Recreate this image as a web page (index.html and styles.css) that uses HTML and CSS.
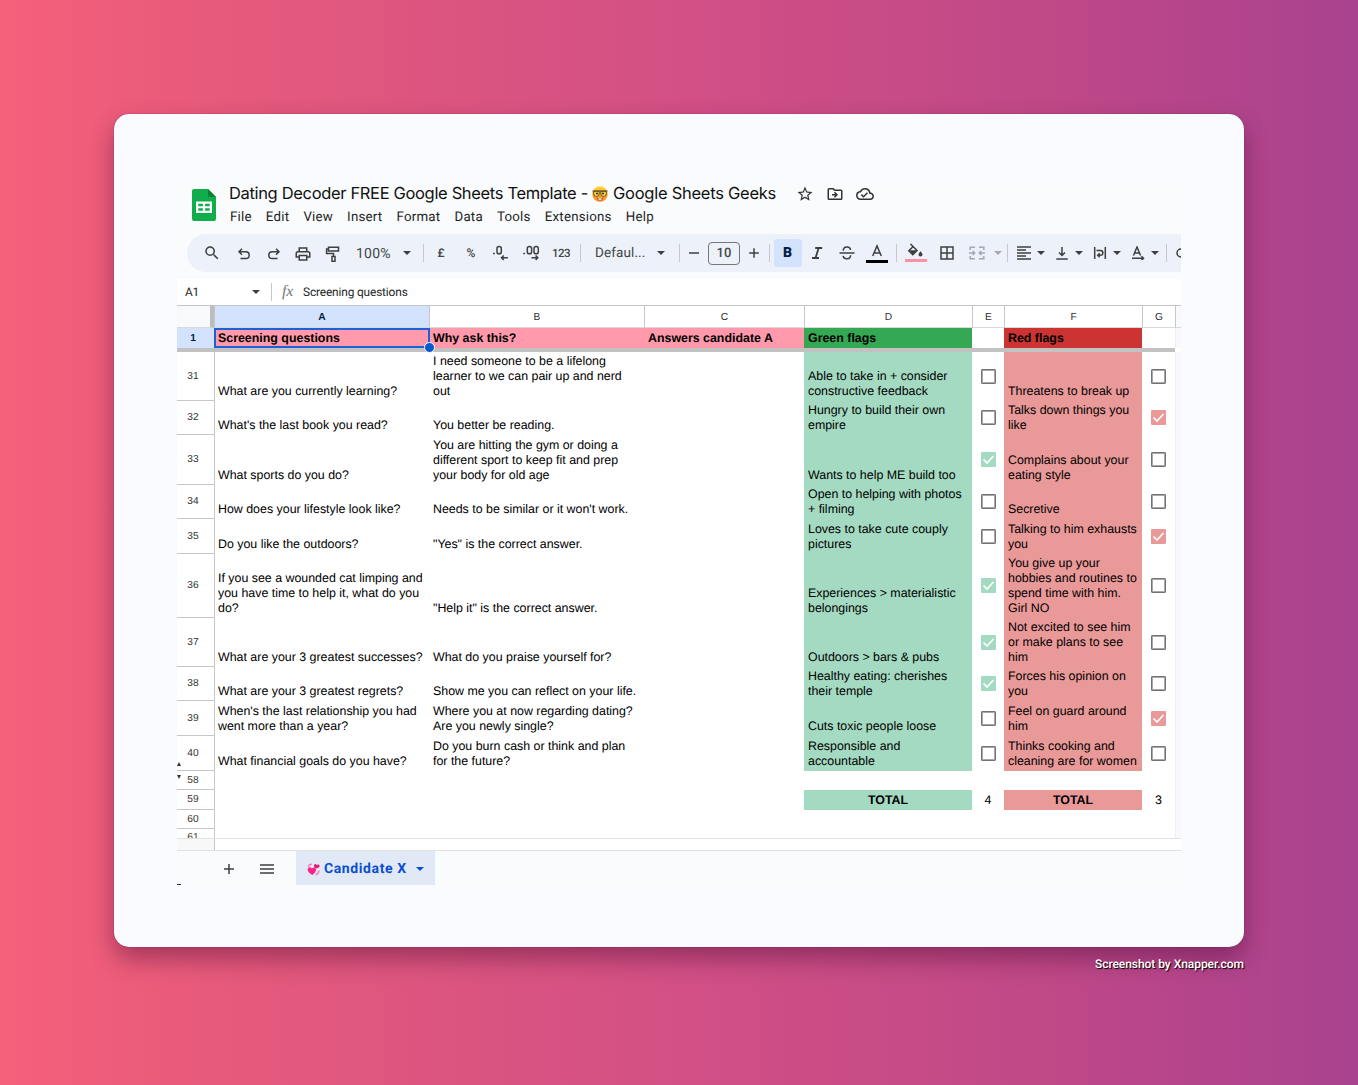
FILE: index.html
```html
<!DOCTYPE html>
<html lang="en">
<head>
    <meta charset="UTF-8">
    <meta name="viewport" content="width=device-width, initial-scale=1.0">
    <title>Dating Decoder FREE Google Sheets Template</title>
    <link rel="stylesheet" href="styles.css">
</head>
<body>
    <main class="card">
        <div class="app">
            <header class="header">
                <svg class="logo" viewBox="0 0 24 32" width="24" height="32">
                    <path d="M2 0H16L24 8V30a2 2 0 0 1-2 2H2a2 2 0 0 1-2-2V2a2 2 0 0 1 2-2z" fill="#0fae4b"/>
                    <path d="M16 0L24 8H16z" fill="#0b8039"/>
                    <path d="M4 12.500H20V24H4z" fill="#fff"/>
                    <path d="M6.300 14.700h4.600v2.500H6.300zM13.100 14.700h4.600v2.500h-4.600zM6.300 19.300h4.600v2.500H6.300zM13.100 19.300h4.600v2.500h-4.600z" fill="#0fae4b"/>
                </svg>
                <div class="heading">
                    <div class="title-row">
                        <span class="title title-main">Dating Decoder FREE Google Sheets Template -</span>
                        <svg class="nerd" viewBox="0 0 16 16" width="16" height="16">
                            <defs>
                                <linearGradient id="face" x1="0" y1="0" x2="0" y2="1">
                                    <stop offset="0" stop-color="#ffd83a"/>
                                    <stop offset="1" stop-color="#f9862c"/>
                                </linearGradient>
                            </defs>
                            <circle cx="8" cy="8" r="7.800" fill="url(#face)"/>
                            <path d="M.5 5h15M1.700 5.200h5.500v2.500c0 2-1.100 2.700-2.700 2.700S1.700 9.700 1.700 7.700zM8.800 5.200h5.500v2.500c0 2-1.200 2.700-2.800 2.700S8.800 9.700 8.800 7.700z" fill="#f5d24a" stroke="#5d4a22" stroke-width="1"/>
                            <circle cx="5" cy="7.500" r=".9" fill="#2a1a0a"/>
                            <circle cx="11" cy="7.500" r=".9" fill="#2a1a0a"/>
                            <path d="M4.500 12c2.300 1 4.700 1 7 0-.7 1.600-2 2.400-3.500 2.400S5.200 13.600 4.500 12z" fill="#a5441a"/>
                            <path d="M6.500 12.500h3v1.300h-3z" fill="#fff"/>
                        </svg>
                        <span class="title title-end">Google Sheets Geeks</span>
                        <svg class="doc-icon star" viewBox="0 0 24 24" width="18" height="18"><path d="M22 9.240l-7.190-.62L12 2 9.190 8.630 2 9.240l5.460 4.730L5.820 21 12 17.270 18.180 21l-1.630-7.030L22 9.240zM12 15.400l-3.760 2.270 1-4.280-3.320-2.880 4.380-.38L12 6.100l1.710 4.040 4.380.38-3.320 2.880 1 4.280L12 15.400z"/></svg>
                        <svg class="doc-icon" viewBox="0 0 24 24" width="18" height="18"><path d="M20 6h-8l-2-2H4a2 2 0 0 0-2 2v12a2 2 0 0 0 2 2h16a2 2 0 0 0 2-2V8a2 2 0 0 0-2-2zm0 12H4V6h5.200l2 2H20v10zm-8-1l4-4-4-4-1.400 1.400 1.600 1.600H8v2h4.200l-1.600 1.600z"/></svg>
                        <svg class="doc-icon" viewBox="0 0 24 24" width="18" height="18"><path d="M19.350 10.040A7.490 7.490 0 0 0 12 4C9.110 4 6.600 5.640 5.350 8.040A5.994 5.994 0 0 0 0 14c0 3.310 2.690 6 6 6h13c2.760 0 5-2.240 5-5 0-2.640-2.050-4.780-4.650-4.960zM19 18H6c-2.210 0-4-1.790-4-4 0-2.050 1.530-3.760 3.560-3.970l1.070-.11.5-.95A5.469 5.469 0 0 1 12 6c2.620 0 4.880 1.860 5.390 4.430l.3 1.500 1.530.11A2.980 2.980 0 0 1 22 15c0 1.650-1.350 3-3 3zm-9-3.820l-2.090-2.090L6.500 13.500 10 17l6.010-6.010-1.410-1.410z"/></svg>
                    </div>
                    <nav class="menu">
                        <span>File</span>
                        <span>Edit</span>
                        <span>View</span>
                        <span>Insert</span>
                        <span>Format</span>
                        <span>Data</span>
                        <span>Tools</span>
                        <span>Extensions</span>
                        <span>Help</span>
                    </nav>
                </div>
            </header>

            <div class="toolbar">
                <span><svg viewBox="0 0 24 24" width="18" height="18"><path d="M15.500 14h-.79l-.28-.27A6.470 6.470 0 0 0 16 9.500 6.500 6.500 0 1 0 9.500 16c1.610 0 3.090-.59 4.230-1.570l.27.28v.79l5 4.990L20.490 19l-4.990-5zm-6 0C7.010 14 5 11.990 5 9.500S7.010 5 9.500 5 14 7.010 14 9.500 11.990 14 9.500 14z"/></svg></span>
                <span class="low"><svg class="line" viewBox="0 0 14 14" width="14" height="14"><path d="M5 1.800L2 4.800l3 3M2.200 4.800h6.600a3.300 3.300 0 0 1 0 6.700H3.500"/></svg></span>
                <span class="low"><svg class="line" viewBox="0 0 14 14" width="14" height="14"><path d="M9 1.800l3 3-3 3M11.800 4.800H5.200a3.300 3.300 0 0 0 0 6.700h5.300"/></svg></span>
                <span class="low"><svg viewBox="0 0 24 24" width="18" height="18"><path d="M19 8h-1V3H6v5H5c-1.660 0-3 1.340-3 3v6h4v4h12v-4h4v-6c0-1.660-1.340-3-3-3zM8 5h8v3H8V5zm8 12v2H8v-4h8v2zm2-2v-2H6v2H4v-4c0-.55.45-1 1-1h14c.55 0 1 .45 1 1v4h-2z"/></svg></span>
                <span class="low"><svg class="line" viewBox="0 0 16 18" width="16" height="18"><path d="M3.500 2.300h10v3.600h-10zM3.500 4.100H1.600v4.300h6.900v3M7 11.400h3v4.800H7z"/></svg></span>
                <span class="zoom">100%</span>
                <span><i class="caret"></i></span>
                <span><i class="sep"></i></span>
                <span class="small">£</span>
                <span class="small">%</span>
                <span><svg class="line" viewBox="0 0 17 16" width="17" height="16"><path d="M1 8.500h1.800M15.800 12.700H9.500M11.700 10.500l-2.200 2.200 2.200 2.200"/><rect x="5" y="1.500" width="4.300" height="7.300" rx="2.100"/></svg></span>
                <span><svg class="line" viewBox="0 0 17 16" width="17" height="16"><path d="M.3 8.500h1.800M8.500 12.700h6.300M12.600 10.500l2.200 2.200-2.200 2.200"/><rect x="4.300" y="1.500" width="4.300" height="7.300" rx="2.100"/><rect x="11" y="1.500" width="4.300" height="7.300" rx="2.100"/></svg></span>
                <span class="num">123</span>
                <span><i class="sep"></i></span>
                <span class="font-name">Defaul...</span>
                <span><i class="caret"></i></span>
                <span><i class="sep"></i></span>
                <span><svg class="line" viewBox="0 0 12 12" width="12" height="12"><path d="M1 6h10"/></svg></span>
                <span><b class="size">10</b></span>
                <span><svg class="line" viewBox="0 0 12 12" width="12" height="12"><path d="M1.200 6h9.600M6 1.200v9.600"/></svg></span>
                <span><i class="sep"></i></span>
                <span><b class="bold-btn">B</b></span>
                <span><svg class="line thick" viewBox="0 0 12 14" width="12" height="14"><path d="M4.200 2h7M1 12h7M7.700 2L4.500 12"/></svg></span>
                <span><svg class="line" viewBox="0 0 16 14" width="16" height="14"><path d="M.5 7h15M4.300 4.700C4.300 0 11 0 11.600 4M11.600 9.200c0 4.600-6.800 4.600-7.500.6"/></svg></span>
                <span class="low"><svg class="line" viewBox="0 0 22 20" width="22" height="20"><path d="M6.700 12L11 2l4.300 10M8 9h6"/><path class="ink" d="M0 16h22v3H0z"/></svg></span>
                <span><i class="sep"></i></span>
                <span><svg viewBox="0 0 22 20" width="22" height="20"><path class="fill" d="M0 16h22v3H0z"/><path class="stroke" d="M5.500 1L12 7.500l-4.200 4.200L3.800 7.700 8.500 3.200"/><path d="M4 7.300h8.300L8 11.800zM15.500 8.200s-2 2.200-2 3.300a2 2 0 0 0 4 0c0-1.100-2-3.300-2-3.300z"/></svg></span>
                <span><svg class="line" viewBox="0 0 14 14" width="14" height="14"><path d="M1 1h12v12H1zM7 1v12M1 7h12"/></svg></span>
                <span class="off"><svg class="line" viewBox="0 0 16 14" width="16" height="14"><path d="M6 1.200H1.200V4M10 1.200h4.800V4M6 12.800H1.200V10M10 12.800h4.800V10M0 7h5.500M16 7h-5.500M3.700 5l2 2-2 2M12.300 5l-2 2 2 2"/></svg></span>
                <span class="off"><i class="caret"></i></span>
                <span><i class="sep"></i></span>
                <span class="drop"><svg class="line" viewBox="0 0 16 14" width="16" height="14"><path d="M1 1h14M1 4h9M1 7h14M1 10h9M1 13h14"/></svg><i class="caret"></i></span>
                <span class="drop"><svg class="line" viewBox="0 0 16 14" width="16" height="14"><path d="M2.300 13h11.500M8 1v8.500M5 6.500l3 3 3-3"/></svg><i class="caret"></i></span>
                <span class="drop"><svg class="line" viewBox="0 0 16 14" width="16" height="14"><path d="M2.700 1v12M13.300 1v12M4.500 4.500h4a2.300 2.300 0 0 1 0 4.800H6M7.700 7.200L5.700 9.300l2 2"/></svg><i class="caret"></i></span>
                <span class="drop"><svg class="line" viewBox="0 0 16 14" width="16" height="14"><path d="M3.500 9.500L7 1l3.500 8.500M4.500 7h5M2 12.300h11M11.500 10.300l2 2-2 2"/></svg><i class="caret"></i></span>
                <span><i class="sep"></i></span>
                <span class="link"><svg class="line" viewBox="0 0 18 10" width="18" height="10"><path d="M8 1H5a4 4 0 0 0 0 8h3M6 5h6"/></svg></span>
            </div>

            <div class="formula-bar">
                <span class="cell-name">A1</span>
                <i class="caret"></i>
                <i class="sep"></i>
                <span class="fx">fx</span>
                <span>Screening questions</span>
            </div>

            <div class="sheet">
                <div class="row letters">
                    <div class="corner"></div>
                    <div class="active">A</div>
                    <div>B</div>
                    <div>C</div>
                    <div>D</div>
                    <div>E</div>
                    <div>F</div>
                    <div>G</div>
                    <div class="gutter"></div>
                </div>
                <div class="row titles">
                    <div class="index active">1</div>
                    <div class="cell pink selected">Screening questions</div>
                    <div class="cell pink">Why ask this?</div>
                    <div class="cell pink">Answers candidate A</div>
                    <div class="cell dark-green">Green flags</div>
                    <div></div>
                    <div class="cell dark-red">Red flags</div>
                    <div></div>
                    <div class="gutter"></div>
                </div>
                <div class="freeze"></div>
                <div class="row h49">
                    <div class="index">31</div>
                    <div class="cell first">What are you currently learning?</div>
                    <div class="cell">I need someone to be a lifelong<br>learner to we can pair up and nerd<br>out</div>
                    <div class="cell"></div>
                    <div class="cell green">Able to take in + consider<br>constructive feedback</div>
                    <div class="check"><i></i></div>
                    <div class="cell red">Threatens to break up</div>
                    <div class="check"><i></i></div>
                    <div class="gutter"></div>
                </div>
                <div class="row h34">
                    <div class="index">32</div>
                    <div class="cell first">What's the last book you read?</div>
                    <div class="cell">You better be reading.</div>
                    <div class="cell"></div>
                    <div class="cell green">Hungry to build their own<br>empire</div>
                    <div class="check"><i></i></div>
                    <div class="cell red">Talks down things you<br>like</div>
                    <div class="check"><svg class="tick red" viewBox="0 0 15 15" width="15" height="15"><path d="M2.500 7.500l3.500 3.500 6.500-7"/></svg></div>
                    <div class="gutter"></div>
                </div>
                <div class="row h50">
                    <div class="index">33</div>
                    <div class="cell first">What sports do you do?</div>
                    <div class="cell">You are hitting the gym or doing a<br>different sport to keep fit and prep<br>your body for old age</div>
                    <div class="cell"></div>
                    <div class="cell green">Wants to help ME build too</div>
                    <div class="check"><svg class="tick green" viewBox="0 0 15 15" width="15" height="15"><path d="M2.500 7.500l3.500 3.500 6.500-7"/></svg></div>
                    <div class="cell red">Complains about your<br>eating style</div>
                    <div class="check"><i></i></div>
                    <div class="gutter"></div>
                </div>
                <div class="row h34">
                    <div class="index">34</div>
                    <div class="cell first">How does your lifestyle look like?</div>
                    <div class="cell">Needs to be similar or it won't work.</div>
                    <div class="cell"></div>
                    <div class="cell green">Open to helping with photos<br>+ filming</div>
                    <div class="check"><i></i></div>
                    <div class="cell red">Secretive</div>
                    <div class="check"><i></i></div>
                    <div class="gutter"></div>
                </div>
                <div class="row h35">
                    <div class="index">35</div>
                    <div class="cell first">Do you like the outdoors?</div>
                    <div class="cell">"Yes" is the correct answer.</div>
                    <div class="cell"></div>
                    <div class="cell green">Loves to take cute couply<br>pictures</div>
                    <div class="check"><i></i></div>
                    <div class="cell red">Talking to him exhausts<br>you</div>
                    <div class="check"><svg class="tick red" viewBox="0 0 15 15" width="15" height="15"><path d="M2.500 7.500l3.500 3.500 6.500-7"/></svg></div>
                    <div class="gutter"></div>
                </div>
                <div class="row h64">
                    <div class="index">36</div>
                    <div class="cell first">If you see a wounded cat limping and<br>you have time to help it, what do you<br>do?</div>
                    <div class="cell">"Help it" is the correct answer.</div>
                    <div class="cell"></div>
                    <div class="cell green">Experiences &gt; materialistic<br>belongings</div>
                    <div class="check"><svg class="tick green" viewBox="0 0 15 15" width="15" height="15"><path d="M2.500 7.500l3.500 3.500 6.500-7"/></svg></div>
                    <div class="cell red">You give up your<br>hobbies and routines to<br>spend time with him.<br>Girl NO</div>
                    <div class="check"><i></i></div>
                    <div class="gutter"></div>
                </div>
                <div class="row h49">
                    <div class="index">37</div>
                    <div class="cell first">What are your 3 greatest successes?</div>
                    <div class="cell">What do you praise yourself for?</div>
                    <div class="cell"></div>
                    <div class="cell green">Outdoors &gt; bars &amp; pubs</div>
                    <div class="check"><svg class="tick green" viewBox="0 0 15 15" width="15" height="15"><path d="M2.500 7.500l3.500 3.500 6.500-7"/></svg></div>
                    <div class="cell red">Not excited to see him<br>or make plans to see<br>him</div>
                    <div class="check"><i></i></div>
                    <div class="gutter"></div>
                </div>
                <div class="row h34">
                    <div class="index">38</div>
                    <div class="cell first">What are your 3 greatest regrets?</div>
                    <div class="cell">Show me you can reflect on your life.</div>
                    <div class="cell"></div>
                    <div class="cell green">Healthy eating: cherishes<br>their temple</div>
                    <div class="check"><svg class="tick green" viewBox="0 0 15 15" width="15" height="15"><path d="M2.500 7.500l3.500 3.500 6.500-7"/></svg></div>
                    <div class="cell red">Forces his opinion on<br>you</div>
                    <div class="check"><i></i></div>
                    <div class="gutter"></div>
                </div>
                <div class="row h35">
                    <div class="index">39</div>
                    <div class="cell first">When's the last relationship you had<br>went more than a year?</div>
                    <div class="cell">Where you at now regarding dating?<br>Are you newly single?</div>
                    <div class="cell"></div>
                    <div class="cell green">Cuts toxic people loose</div>
                    <div class="check"><i></i></div>
                    <div class="cell red">Feel on guard around<br>him</div>
                    <div class="check"><svg class="tick red" viewBox="0 0 15 15" width="15" height="15"><path d="M2.500 7.500l3.500 3.500 6.500-7"/></svg></div>
                    <div class="gutter"></div>
                </div>
                <div class="row h35">
                    <div class="index">40<i class="more up"></i></div>
                    <div class="cell first">What financial goals do you have?</div>
                    <div class="cell">Do you burn cash or think and plan<br>for the future?</div>
                    <div class="cell"></div>
                    <div class="cell green">Responsible and<br>accountable</div>
                    <div class="check"><i></i></div>
                    <div class="cell red">Thinks cooking and<br>cleaning are for women</div>
                    <div class="check"><i></i></div>
                    <div class="gutter"></div>
                </div>
                <div class="row h19">
                    <div class="index">58<i class="more down"></i></div>
                    <div class="cell first wide"></div>
                    <div class="gutter"></div>
                </div>
                <div class="row h20">
                    <div class="index">59</div>
                    <div class="cell first"></div>
                    <div class="cell"></div>
                    <div class="cell"></div>
                    <div class="cell green total">TOTAL</div>
                    <div class="cell sum">4</div>
                    <div class="cell red total">TOTAL</div>
                    <div class="cell sum">3</div>
                    <div class="gutter"></div>
                </div>
                <div class="row h19">
                    <div class="index">60</div>
                    <div class="cell first wide"></div>
                    <div class="gutter"></div>
                </div>
                <div class="row h9">
                    <div class="index cut">61</div>
                    <div class="cell first wide"></div>
                    <div class="gutter"></div>
                </div>
                <div class="scroll-track"><i></i></div>
            </div>

            <footer class="tabs">
                <svg class="line add" viewBox="0 0 12 12" width="12" height="12"><path d="M1 6h10M6 1v10"/></svg>
                <svg class="line all" viewBox="0 0 14 10" width="14" height="10"><path d="M0 1h14M0 5h14M0 9h14"/></svg>
                <div class="tab">
                    <svg viewBox="0 0 13 13" width="13" height="13">
                        <path d="M5.500 12C2.300 10 .2 8.300.7 5.900 1.200 3.900 3.800 3.700 4.900 5.400 6.200 3.800 9 4.400 9 6.700c0 2-1.600 3.800-3.500 5.300z" fill="#f9268f"/>
                        <path d="M8.700 5.500C7 4 6.300 2.300 7.500 1.400c.9-.6 2-.2 2.300.8.800-1.100 2.600-.8 2.800.5.200 1.500-1.700 2.500-3.900 2.800z" fill="#e0206f"/>
                        <path d="M1.300 3.600C1.800 2 3 1.200 4.800 1.200M12 7.500c-.1 2.200-1.300 3.800-3.300 4.300" fill="none" stroke="#ff6cb6" stroke-width="1.300"/>
                    </svg>
                    <span>Candidate X</span>
                    <i class="caret"></i>
                </div>
            </footer>
            <i class="edge-mark"></i>
        </div>
    </main>
    <p class="credit">Screenshot by Xnapper.com</p>
</body>
</html>
```
FILE: styles.css
```css
* {
    box-sizing: border-box;
}
body {
    margin: 0;
    height: 1085px;
    padding: 114px 114px 0 114px;
    overflow: hidden;
    background: linear-gradient(90deg, #f5607a, #e5597c 18%, #d25085 50%, #bf4888 78%, #a9428f);
    font-family: Roboto, "Liberation Sans", sans-serif;
    text-rendering: geometricPrecision;
}
.card {
    height: 833px;
    padding: 69px 63px 0;
    border-radius: 15px;
    background: #fafbff;
    box-shadow: 0 0 1px rgba(60, 0, 40, 0.7), 0 12px 24px rgba(60, 0, 40, 0.4);
}
.app {
    width: 1004px;
    height: 702px;
    overflow: hidden;
    background: #f9fbfd;
    color: #1f1f1f;
}

/* title and menus */
.header {
    display: flex;
    height: 51px;
    padding-left: 15px;
}
.logo {
    margin-top: 6px;
}
.heading {
    padding-left: 13px;
}
.title-row {
    display: flex;
    align-items: center;
    height: 22px;
}
.title {
    padding-bottom: 2px;
    font-family: Inter, sans-serif;
    font-size: 16.500px;
    line-height: 20px;
    white-space: nowrap;
    color: #111;
}
.title-main {
    width: 363px;
    letter-spacing: -0.340px;
}
.title-end {
    width: 164px;
    margin-left: 5px;
    letter-spacing: -0.260px;
}
.doc-icon {
    margin-left: 12px;
    fill: #333;
}
.doc-icon.star {
    margin-left: 19px;
}
.menu {
    display: flex;
    gap: 14.200px;
    padding: 1px 0 0 1px;
    font-size: 13.300px;
    line-height: 24px;
    letter-spacing: 0.200px;
}

/* toolbar */
.toolbar {
    display: grid;
    grid-template-columns: 31px 33px 27px 32px 28px 52px 15px 18px 18px 42px 17px 44px 16px 23px 53px 31px 7px 22px 38px 21px 10px 27px 32px 28px 32px 7px 32px 30px 30px 11px 9px 37px 38px 38px 38px 7px 11px;
    height: 38px;
    margin-left: 10px;
    padding-left: 9px;
    border-radius: 19px 0 0 19px;
    background: #ecf1fa;
    font-size: 13px;
    color: #444746;
    overflow: hidden;
}
.toolbar > span {
    display: flex;
    align-items: center;
    justify-content: center;
    min-width: 0;
}
.toolbar svg {
    flex: none;
    fill: #3c403f;
}
.toolbar .low {
    padding-top: 2px;
}
svg.line,
.toolbar svg.line,
.toolbar .stroke {
    fill: none;
    stroke: #3c403f;
    stroke-width: 1.5;
}
.toolbar svg.thick {
    stroke-width: 1.8;
}
.toolbar .ink {
    fill: #000;
    stroke: none;
}
.toolbar .fill {
    fill: #ff8fa3;
}
.toolbar .zoom {
    justify-content: flex-start;
    padding: 2px 0 0 9px;
    font-size: 14px;
    letter-spacing: 0.200px;
}
.toolbar .small {
    font-size: 12px;
    font-weight: 500;
}
.toolbar .num {
    font-size: 11.500px;
    font-weight: 500;
    letter-spacing: -0.500px;
}
.toolbar .font-name {
    justify-content: flex-start;
    padding-left: 3px;
    font-size: 13.500px;
    letter-spacing: 0.100px;
}
.caret {
    flex: none;
    border: 4px solid transparent;
    border-top-color: #3c403f;
    border-bottom: 0;
}
.sep {
    flex: none;
    width: 1px;
    height: 18px;
    background: #c7c7c7;
}
.size {
    flex: none;
    width: 32px;
    border: 1px solid #747775;
    border-radius: 4px;
    font-size: 13px;
    font-weight: 500;
    line-height: 21px;
    text-align: center;
}
.bold-btn {
    flex: none;
    width: 28px;
    border-radius: 3px;
    background: #d3e3fd;
    color: #041e49;
    font-size: 14px;
    font-weight: 900;
    line-height: 28px;
    text-align: center;
}
.off {
    opacity: 0.4;
}
.drop {
    gap: 5px;
}
.toolbar .link {
    justify-content: flex-start;
    padding-left: 6px;
}

/* formula bar */
.formula-bar {
    display: flex;
    align-items: center;
    height: 26px;
    margin-top: 7px;
    padding-left: 8px;
    background: #fff;
    font-size: 11.900px;
    letter-spacing: -0.150px;
}
.cell-name {
    width: 67px;
}
.formula-bar .sep {
    margin-left: 11px;
}
.fx {
    width: 31px;
    padding-left: 10px;
    font-family: "Liberation Serif", serif;
    font-size: 16px;
    font-style: italic;
    color: #777;
}

/* grid */
.sheet {
    background: #fff;
    font-family: "Liberation Sans", Arial, sans-serif;
    font-size: 12.400px;
    line-height: 15px;
    color: #000;
}
.row {
    display: grid;
    grid-template-columns: 37px 215px 215px 160px 168px 32px 138px 33px 6px;
}
.letters {
    height: 23px;
    border-top: 1px solid #c4c7c5;
    font-size: 10.200px;
    line-height: 23px;
    text-align: center;
    color: #333;
}
.letters div {
    height: 22px;
    border-left: 1px solid #c4c7c5;
    border-bottom: 1px solid #d8dada;
}
.letters .corner {
    border-left: 0;
    border-right: 4px solid #bdbdbd;
    background: #f8f9fa;
}
.active {
    background: #d3e3fd;
    color: #041e49;
    font-weight: bold;
}
.gutter {
    border-left: 1px solid #eee;
    background: #f8f9fa;
}
.titles {
    height: 20px;
    font-weight: bold;
}
.freeze {
    width: 998px;
    height: 4px;
    background: #c2c2c2;
}
.index {
    position: relative;
    display: flex;
    align-items: center;
    justify-content: center;
    padding-right: 5px;
    border-bottom: 1px solid #c4c7c5;
    font-size: 10.200px;
    color: #333;
}
.index.active {
    border-bottom: 0;
    color: #041e49;
}
.cut {
    align-items: flex-start;
    padding-top: 1px;
    overflow: hidden;
    border-bottom: 0;
}
.cell {
    display: flex;
    align-items: flex-end;
    padding: 0 0 2px 4px;
    white-space: nowrap;
}
.first {
    padding-left: 3px;
    border-left: 1px solid #c4c7c5;
}
.wide {
    grid-column: span 7;
}
.pink {
    background: #ff99ab;
}
.selected {
    position: relative;
    margin-right: -1px;
    padding: 0 0 0 2px;
    border: 2px solid #1a62d6;
    z-index: 1;
}
.selected::after {
    content: "";
    position: absolute;
    right: -7px;
    bottom: -7px;
    width: 9px;
    height: 9px;
    border: 1px solid #fff;
    border-radius: 50%;
    background: #0b57d0;
}
.dark-green {
    background: #34a853;
}
.dark-red {
    background: #cc3333;
}
.green {
    background: #a4dac1;
}
.red {
    background: #ea9999;
}
.h9 { height: 9px; }
.h19 { height: 19px; }
.h20 { height: 20px; }
.h34 { height: 34px; }
.h35 { height: 35px; }
.h49 { height: 49px; }
.h50 { height: 50px; }
.h64 { height: 64px; }
.check {
    display: flex;
    align-items: center;
    justify-content: center;
    padding-bottom: 1px;
}
.check i {
    width: 15px;
    height: 15px;
    border: 1px solid #737373;
    border-radius: 1px;
    box-shadow: inset 0 0 0 1px #a8a8a8;
}
.tick {
    border-radius: 1px;
}
.tick path {
    fill: none;
    stroke: #fff;
    stroke-width: 1.700;
}
.total {
    justify-content: center;
    padding-left: 0;
    font-weight: bold;
}
.sum {
    justify-content: center;
    padding-left: 0;
}
.more {
    position: absolute;
    left: 0;
    border: 2.500px solid transparent;
}
.more.up {
    bottom: 4px;
    border-bottom: 4px solid #333;
    border-top: 0;
}
.more.down {
    top: 4px;
    border-top: 4px solid #333;
    border-bottom: 0;
}
.scroll-track {
    height: 13px;
    border-top: 1px solid #e1e3e3;
    border-bottom: 1px solid #e1e3e3;
}
.scroll-track i {
    display: block;
    width: 38px;
    height: 11px;
    border-right: 1px solid #c4c7c5;
    background: #f8f8f8;
}

/* sheet tabs */
.tabs {
    display: flex;
    align-items: center;
    height: 34px;
    padding-left: 46px;
}
.tabs .line {
    margin-top: 2px;
}
.tabs .all {
    margin: 2px 22px 0 25px;
}
.tab {
    display: flex;
    align-items: center;
    width: 139px;
    height: 34px;
    padding: 2px 0 0 11px;
    background: #e1e9f7;
    font-size: 14px;
    font-weight: 700;
    letter-spacing: 0.600px;
    color: #0b4fd0;
}
.tab span {
    width: 92px;
    margin-left: 4px;
}
.tab .caret {
    border-top-color: #0b4fd0;
}
.edge-mark {
    display: block;
    width: 4px;
    height: 1px;
    margin-top: -1px;
    background: #1c2b4a;
}
.credit {
    margin: 10px 0 0;
    text-align: right;
    font-size: 12px;
    line-height: 14px;
    font-weight: 500;
    letter-spacing: -0.050px;
    color: #fff;
    text-shadow: 1px 1px 1px #000;
}
```
